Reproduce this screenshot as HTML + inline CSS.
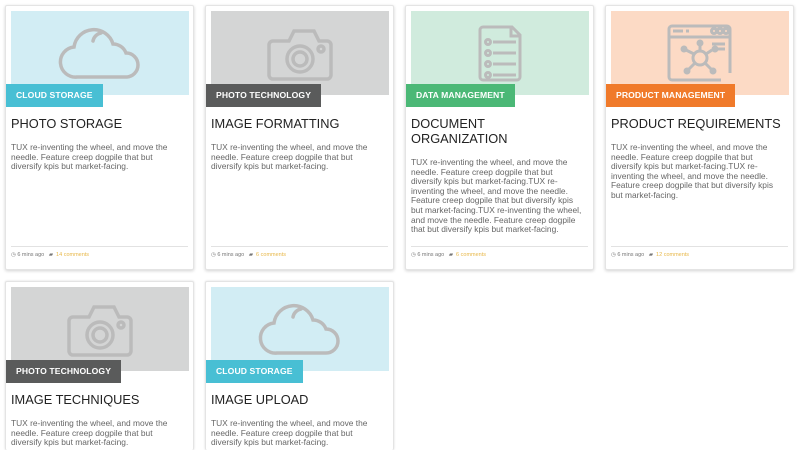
<!DOCTYPE html>
<html style="width:800px;height:450px;overflow:hidden"><head><meta charset="utf-8"><style>
*{margin:0;padding:0;box-sizing:border-box}
body{width:800px;height:450px;background:#fff;position:relative;overflow:hidden;font-family:"Liberation Sans",sans-serif}
.card{position:absolute;width:189px;height:265px;background:#fff;border:1px solid #e4e4e4;box-shadow:0 1px 3px rgba(0,0,0,.18);border-radius:2px;overflow:hidden}
.img{position:absolute;left:5px;top:5px;width:178px;height:84px}
.img svg{display:block}
.lab{position:absolute;left:0;top:78px;height:23px;line-height:23px;padding:0 10px;color:#fff;font-weight:bold;font-size:8.6px;letter-spacing:.1px;white-space:nowrap}
.ttl{position:absolute;left:5px;top:110px;width:185px;font-size:12.8px;line-height:15px;color:#222;white-space:nowrap}
.txt{position:absolute;left:5px;width:180px;font-size:8.4px;line-height:9.6px;color:#666;white-space:nowrap}
.ft{position:absolute;left:5px;right:5px;top:240px;border-top:1px solid #e2e2e2;padding-top:5px;font-size:5.5px;color:#777}
.ft b{font-weight:normal;color:#e8b84a;margin-left:8px}
.r2{height:169px;border-bottom:none;box-shadow:0 0 2px rgba(0,0,0,.15)}
</style></head><body>

<div class="card" style="left:5px;top:5px">
<div class="img" style="background:#d2edf4"><svg width="178" height="84"><g fill="none" stroke="#bbb" stroke-width="3.5" stroke-linecap="round"><path d="M66 66 H115 A12 12 0 0 0 115 42 A14 14 0 0 0 102 33 A20 20 0 0 0 63 36 A15 15 0 0 0 66 66 Z"/><path d="M82 30 A10 10 0 0 1 90 22"/></g></svg></div>
<div class="lab" style="background:#48bfd4">CLOUD STORAGE</div>
<div class="ttl">PHOTO STORAGE</div>
<div class="txt" style="top:137px">TUX re-inventing the wheel, and move the<br>needle. Feature creep dogpile that but<br>diversify kpis but market-facing.</div>
<div class="ft">◷ 6 mins ago &nbsp; ▰<b style="margin-left:3px">14 comments</b></div>
</div>

<div class="card" style="left:205px;top:5px">
<div class="img" style="background:#d4d5d5"><svg width="178" height="84"><g fill="none" stroke="#bbb" stroke-width="3.5"><path d="M62 30 H78 L83 20 H103 L108 30 H116 A4 4 0 0 1 120 34 V64 A4 4 0 0 1 116 68 H62 A4 4 0 0 1 58 64 V34 A4 4 0 0 1 62 30 Z"/><circle cx="89" cy="48" r="13"/><circle cx="89" cy="48" r="7"/><circle cx="110" cy="38" r="3"/></g></svg></div>
<div class="lab" style="background:#5a5b5b">PHOTO TECHNOLOGY</div>
<div class="ttl">IMAGE FORMATTING</div>
<div class="txt" style="top:137px">TUX re-inventing the wheel, and move the<br>needle. Feature creep dogpile that but<br>diversify kpis but market-facing.</div>
<div class="ft">◷ 6 mins ago &nbsp; ▰<b style="margin-left:3px">6 comments</b></div>
</div>

<div class="card" style="left:405px;top:5px">
<div class="img" style="background:#d0ebdd"><svg width="178" height="84"><g fill="none" stroke="#bbb" stroke-width="3"><path d="M72 16 H101 L109 24 V66 A3 3 0 0 1 106 69 H72 A3 3 0 0 1 69 66 V19 A3 3 0 0 1 72 16 Z"/><path d="M100 17 V25 H108"/><circle cx="77" cy="31" r="2.5"/><circle cx="77" cy="42" r="2.5"/><circle cx="77" cy="53" r="2.5"/><circle cx="77" cy="64" r="2.5"/><path d="M82 31H105M82 42H105M82 53H105M82 64H105"/></g></svg></div>
<div class="lab" style="background:#4bb876">DATA MANAGEMENT</div>
<div class="ttl">DOCUMENT<br>ORGANIZATION</div>
<div class="txt" style="top:152px">TUX re-inventing the wheel, and move the<br>needle. Feature creep dogpile that but<br>diversify kpis but market-facing.TUX re-<br>inventing the wheel, and move the needle.<br>Feature creep dogpile that but diversify kpis<br>but market-facing.TUX re-inventing the wheel,<br>and move the needle. Feature creep dogpile<br>that but diversify kpis but market-facing.</div>
<div class="ft">◷ 6 mins ago &nbsp; ▰<b style="margin-left:3px">6 comments</b></div>
</div>

<div class="card" style="left:605px;top:5px">
<div class="img" style="background:#fcdac5"><svg width="178" height="84"><g fill="none" stroke="#bbb" stroke-width="3"><path d="M119 62 V18 A3 3 0 0 0 116 15 H61 A3 3 0 0 0 58 18 V66 A3 3 0 0 0 61 69 H110"/><path d="M58 26 H119"/><path d="M62 20H72M75 20H78" /><circle cx="103" cy="20" r="2.5"/><circle cx="109" cy="20" r="2.5"/><circle cx="115" cy="20" r="2.5"/><path d="M101 33H114M105 38H114"/><circle cx="89" cy="47" r="7"/><path d="M89 40V34M83 43L75 39M95 43L101 39M84 52L78 58M94 52L100 58"/></g><g fill="#bbb"><circle cx="89" cy="32" r="3.5"/><circle cx="73" cy="38" r="3.5"/><circle cx="104" cy="38" r="3.5"/><circle cx="76" cy="60" r="3.5"/><circle cx="102" cy="60" r="3.5"/></g></svg></div>
<div class="lab" style="background:#f07a2a">PRODUCT MANAGEMENT</div>
<div class="ttl">PRODUCT REQUIREMENTS</div>
<div class="txt" style="top:137px">TUX re-inventing the wheel, and move the<br>needle. Feature creep dogpile that but<br>diversify kpis but market-facing.TUX re-<br>inventing the wheel, and move the needle.<br>Feature creep dogpile that but diversify kpis<br>but market-facing.</div>
<div class="ft">◷ 6 mins ago &nbsp; ▰<b style="margin-left:3px">12 comments</b></div>
</div>

<div class="card r2" style="left:5px;top:281px">
<div class="img" style="background:#d4d5d5"><svg width="178" height="84"><g fill="none" stroke="#bbb" stroke-width="3.5"><path d="M62 30 H78 L83 20 H103 L108 30 H116 A4 4 0 0 1 120 34 V64 A4 4 0 0 1 116 68 H62 A4 4 0 0 1 58 64 V34 A4 4 0 0 1 62 30 Z"/><circle cx="89" cy="48" r="13"/><circle cx="89" cy="48" r="7"/><circle cx="110" cy="38" r="3"/></g></svg></div>
<div class="lab" style="background:#5a5b5b">PHOTO TECHNOLOGY</div>
<div class="ttl">IMAGE TECHNIQUES</div>
<div class="txt" style="top:137px">TUX re-inventing the wheel, and move the<br>needle. Feature creep dogpile that but<br>diversify kpis but market-facing.</div>
</div>

<div class="card r2" style="left:205px;top:281px">
<div class="img" style="background:#d2edf4"><svg width="178" height="84"><g fill="none" stroke="#bbb" stroke-width="3.5" stroke-linecap="round"><path d="M66 66 H115 A12 12 0 0 0 115 42 A14 14 0 0 0 102 33 A20 20 0 0 0 63 36 A15 15 0 0 0 66 66 Z"/><path d="M82 30 A10 10 0 0 1 90 22"/></g></svg></div>
<div class="lab" style="background:#48bfd4">CLOUD STORAGE</div>
<div class="ttl">IMAGE UPLOAD</div>
<div class="txt" style="top:137px">TUX re-inventing the wheel, and move the<br>needle. Feature creep dogpile that but<br>diversify kpis but market-facing.</div>
</div>

</body></html>
